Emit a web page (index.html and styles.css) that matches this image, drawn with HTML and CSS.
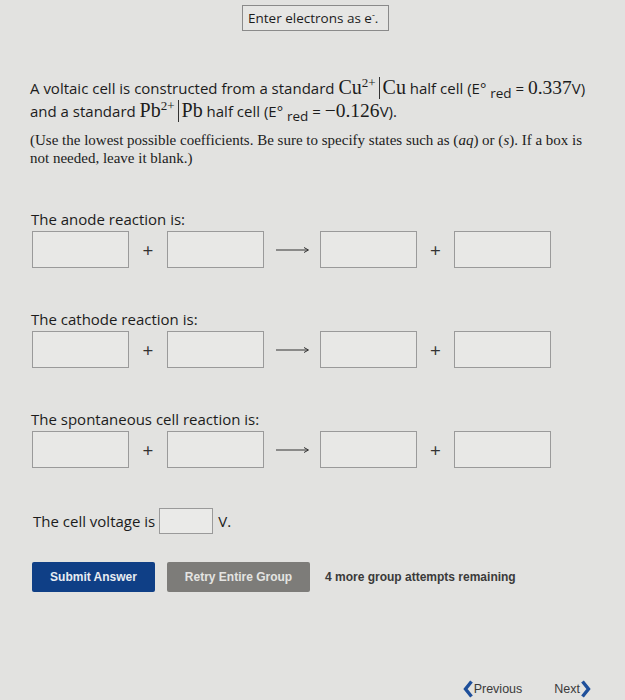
FILE: index.html
```html
<!DOCTYPE html>
<html>
<head>
<meta charset="utf-8">
<link rel="stylesheet" href="styles.css">
</head>
<body>
<div class="page">
  <div class="hint-wrap"><span class="hint">Enter electrons as e<sup class="sm">-</sup>.</span></div>

  <p class="intro">A voltaic cell is constructed from a standard <span class="chem">Cu<sup>2+</sup></span><span class="bar"></span><span class="chem">Cu</span> half cell (E° <sub>red</sub> = <span class="num">0.337</span>V)<br>and a standard <span class="chem">Pb<sup>2+</sup></span><span class="bar"></span><span class="chem">Pb</span> half cell (E° <sub>red</sub> = <span class="num">&minus;0.126</span>V).</p>

  <p class="note">(Use the lowest possible coefficients. Be sure to specify states such as (<i>aq</i>) or (<i>s</i>). If a box is not needed, leave it blank.)</p>

  <div class="section first">
    <div class="label">The anode reaction is:</div>
    <div class="eq">
      <span class="box"></span><span class="op">+</span><span class="box"></span><span class="arrow"><svg viewBox="0 0 34 8" width="34" height="8"><path d="M0 4 H32 M28 1.5 L32.5 4 L28 6.5" fill="none" stroke="#333" stroke-width="1"/></svg></span><span class="box"></span><span class="op op2">+</span><span class="box"></span>
    </div>
  </div>

  <div class="section">
    <div class="label">The cathode reaction is:</div>
    <div class="eq">
      <span class="box"></span><span class="op">+</span><span class="box"></span><span class="arrow"><svg viewBox="0 0 34 8" width="34" height="8"><path d="M0 4 H32 M28 1.5 L32.5 4 L28 6.5" fill="none" stroke="#333" stroke-width="1"/></svg></span><span class="box"></span><span class="op op2">+</span><span class="box"></span>
    </div>
  </div>

  <div class="section">
    <div class="label">The spontaneous cell reaction is:</div>
    <div class="eq">
      <span class="box"></span><span class="op">+</span><span class="box"></span><span class="arrow"><svg viewBox="0 0 34 8" width="34" height="8"><path d="M0 4 H32 M28 1.5 L32.5 4 L28 6.5" fill="none" stroke="#333" stroke-width="1"/></svg></span><span class="box"></span><span class="op op2">+</span><span class="box"></span>
    </div>
  </div>

  <div class="voltage">The cell voltage is <span class="vbox"></span> V.</div>

  <div class="actions">
    <span class="btn submit">Submit Answer</span>
    <span class="btn retry">Retry Entire Group</span>
    <span class="attempts">4 more group attempts remaining</span>
  </div>

  <div class="nav">
    <span class="prev"><svg class="chev" viewBox="0 0 10 18" width="10" height="18"><path d="M8.5 1.5 L2.5 9 L8.5 16.5" fill="none" stroke="#1e4f9a" stroke-width="3.4"/></svg>Previous</span>
    <span class="next">Next<svg class="chev" viewBox="0 0 10 18" width="10" height="18"><path d="M1.5 1.5 L7.5 9 L1.5 16.5" fill="none" stroke="#1e4f9a" stroke-width="3.4"/></svg></span>
  </div>
</div>
</body>
</html>
```

FILE: styles.css
```css
html, body {
  margin: 0;
  padding: 0;
  background: #e2e2e0;
}
.page {
  width: 625px;
  height: 700px;
  box-sizing: border-box;
  padding: 5px 0 0 30px;
  font-family: "Open Sans", "DejaVu Sans", sans-serif;
  color: #1c1c1c;
  position: relative;
}
.hint-wrap {
  display: flex;
  padding-left: 212px;
}
.hint {
  display: inline-block;
  border: 1px solid #8a8a8a;
  background: #e6e6e4;
  font-size: 13.5px;
  line-height: 24px;
  padding: 0 5px;
  width: 135px;
}
.sm { font-size: 9px; line-height: 0; }
.intro {
  margin: 46px 0 0 0;
  font-size: 15px;
  line-height: 23px;
}
.chem {
  font-family: "Liberation Serif", serif;
  font-size: 20px;
  line-height: 0;
}
.chem sup {
  font-size: 13px;
  vertical-align: 7px;
  line-height: 0;
}
.bar {
  display: inline-block;
  width: 1px;
  height: 22px;
  background: #333;
  vertical-align: -5px;
  margin: 0 3px;
}
.intro sub {
  font-size: 13.5px;
  vertical-align: -4px;
  line-height: 0;
}
.num {
  font-family: "Liberation Serif", serif;
  font-size: 19.5px;
  line-height: 0;
}
.note {
  margin: 8px 0 0 0;
  width: 575px;
  font-family: "Liberation Serif", serif;
  font-size: 15px;
  line-height: 18px;
}
.section.first { margin-top: 42px; }
.section { margin-top: 41px; }
.label {
  font-size: 15px;
  line-height: 20px;
  padding-left: 1px;
}
.eq {
  display: flex;
  align-items: center;
  margin-top: 2px;
  padding-left: 2px;
}
.box {
  width: 95px;
  height: 35px;
  border: 1px solid #9a9a9a;
  background: #e8e8e6;
}
.op {
  width: 38px;
  text-align: center;
  font-size: 19px;
  color: #333;
}
.op2 { width: 37px; }
.arrow {
  width: 56px;
  display: flex;
  justify-content: center;
  padding-left: 2px;
  box-sizing: border-box;
}
.voltage {
  margin-top: 40px;
  padding-left: 3px;
  font-size: 15px;
  line-height: 26px;
  display: flex;
  align-items: center;
}
.vbox {
  display: inline-block;
  width: 52px;
  height: 24px;
  border: 1px solid #9a9a9a;
  background: #eaeae8;
  margin: 0 5px 0 4px;
}
.actions {
  margin-top: 28px;
  padding-left: 2px;
  display: flex;
  align-items: center;
  font-family: "Liberation Sans", Arial, sans-serif;
  font-weight: bold;
  font-size: 12px;
}
.btn {
  display: inline-block;
  height: 30px;
  line-height: 30px;
  border-radius: 2px;
  text-align: center;
  color: #e8ecf2;
}
.submit {
  width: 123px;
  background: #0f3f86;
}
.retry {
  width: 143px;
  margin-left: 12px;
  background: #7d7c79;
  color: #e4e4e2;
}
.attempts {
  margin-left: 15px;
  color: #3a3a3a;
  font-size: 12px;
}
.nav {
  position: absolute;
  right: 34px;
  bottom: 2px;
  display: flex;
  align-items: center;
  font-family: "Liberation Sans", Arial, sans-serif;
  font-size: 12.5px;
  color: #3a3a3a;
}
.prev, .next {
  display: flex;
  align-items: center;
}
.prev .chev { margin-right: 1px; }
.next { margin-left: 32px; }
.next .chev { margin-left: 1px; }
```
